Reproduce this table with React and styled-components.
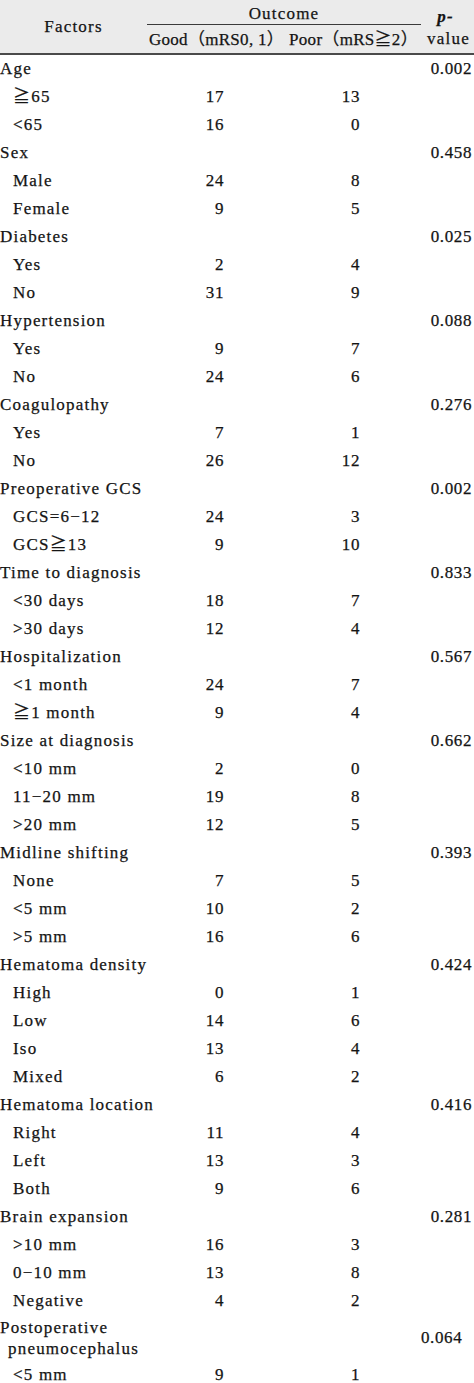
import React from "react";
import styled, { createGlobalStyle } from "styled-components";

const Global = createGlobalStyle`
  html, body { margin: 0; padding: 0; background: #fff; }
  body { font-family: "Liberation Serif", "Noto Sans CJK JP", serif; color: #141414; }
`;

const COLS = "147px 135px 139px 53px";

const Table = styled.div`
  width: 474px;
  font-size: 17px;
  letter-spacing: 1.2px;
  -webkit-text-stroke: 0.25px #141414;
`;

const Head = styled.div`
  display: grid;
  grid-template-columns: ${COLS};
  grid-template-rows: 25px 28px;
  background: #ebebeb;
  border-bottom: 2px solid #4a4a4a;
`;

const HeadCell = styled.div`
  display: flex;
  align-items: center;
  justify-content: center;
  text-align: center;
  line-height: 21px;
  white-space: nowrap;
  grid-column: ${(p) => p.$col || "auto"};
  grid-row: ${(p) => p.$row || "auto"};
`;

const OutcomeCell = styled(HeadCell)`
  border-bottom: 1.5px solid #3a3a3a;
  padding-top: 2px;
`;

const SubHead = styled(HeadCell)`
  letter-spacing: 0.3px;
  padding-top: 1px;
  padding-left: ${(p) => p.$pl || 0}px;
`;

const PHead = styled(HeadCell)`
  flex-direction: column;
  line-height: 22px;
  padding-top: 2px;
  padding-left: 2px;
`;

const Italic = styled.span`
  font-style: italic;
  font-weight: bold;
  padding-right: 6px;
`;

const Row = styled.div`
  display: grid;
  grid-template-columns: ${COLS};
  align-items: center;
  min-height: ${(p) => (p.$tall ? 46 : 28)}px;
`;

const Label = styled.div`
  padding-left: ${(p) => (p.$sub ? 13 : 0)}px;
  line-height: ${(p) => (p.$tall ? "21px" : "28px")};
  white-space: nowrap;
`;

const Wrap = styled.span`
  display: block;
  padding-left: 8px;
`;

const Num = styled.div`
  text-align: right;
  letter-spacing: 0.6px;
  padding-right: ${(p) => p.$pr}px;
  line-height: 28px;
`;

const groups = [
  ["Age", "0.002", [["≧65", 17, 13], ["<65", 16, 0]]],
  ["Sex", "0.458", [["Male", 24, 8], ["Female", 9, 5]]],
  ["Diabetes", "0.025", [["Yes", 2, 4], ["No", 31, 9]]],
  ["Hypertension", "0.088", [["Yes", 9, 7], ["No", 24, 6]]],
  ["Coagulopathy", "0.276", [["Yes", 7, 1], ["No", 26, 12]]],
  ["Preoperative GCS", "0.002", [["GCS=6−12", 24, 3], ["GCS≧13", 9, 10]]],
  ["Time to diagnosis", "0.833", [["<30 days", 18, 7], [">30 days", 12, 4]]],
  ["Hospitalization", "0.567", [["<1 month", 24, 7], ["≧1 month", 9, 4]]],
  ["Size at diagnosis", "0.662", [["<10 mm", 2, 0], ["11−20 mm", 19, 8], [">20 mm", 12, 5]]],
  ["Midline shifting", "0.393", [["None", 7, 5], ["<5 mm", 10, 2], [">5 mm", 16, 6]]],
  ["Hematoma density", "0.424", [["High", 0, 1], ["Low", 14, 6], ["Iso", 13, 4], ["Mixed", 6, 2]]],
  ["Hematoma location", "0.416", [["Right", 11, 4], ["Left", 13, 3], ["Both", 9, 6]]],
  ["Brain expansion", "0.281", [[">10 mm", 16, 3], ["0−10 mm", 13, 8], ["Negative", 4, 2]]],
];

export default function App() {
  return (
    <>
      <Global />
      <Table>
        <Head>
          <HeadCell $col="1" $row="1 / 3">Factors</HeadCell>
          <OutcomeCell $col="2 / 4" $row="1">Outcome</OutcomeCell>
          <SubHead $col="2" $row="2" $pl={4}>Good（mRS0, 1）</SubHead>
          <SubHead $col="3" $row="2" $pl={4}>Poor（mRS≧2）</SubHead>
          <PHead $col="4" $row="1 / 3">
            <Italic>p-</Italic>
            <span>value</span>
          </PHead>
        </Head>
        {groups.map(([name, p, subs]) => (
          <React.Fragment key={name}>
            <Row>
              <Label>{name}</Label>
              <Num $pr={58} />
              <Num $pr={61} />
              <Num $pr={2}>{p}</Num>
            </Row>
            {subs.map(([s, g, b]) => (
              <Row key={name + s}>
                <Label $sub>{s}</Label>
                <Num $pr={58}>{g}</Num>
                <Num $pr={61}>{b}</Num>
                <Num $pr={2} />
              </Row>
            ))}
          </React.Fragment>
        ))}
        <Row $tall>
          <Label $tall>
            Postoperative
            <Wrap>pneumocephalus</Wrap>
          </Label>
          <Num $pr={58} />
          <Num $pr={61} />
          <Num $pr={12}>0.064</Num>
        </Row>
        <Row>
          <Label $sub>{"<5 mm"}</Label>
          <Num $pr={58}>9</Num>
          <Num $pr={61}>1</Num>
          <Num $pr={2} />
        </Row>
      </Table>
    </>
  );
}
